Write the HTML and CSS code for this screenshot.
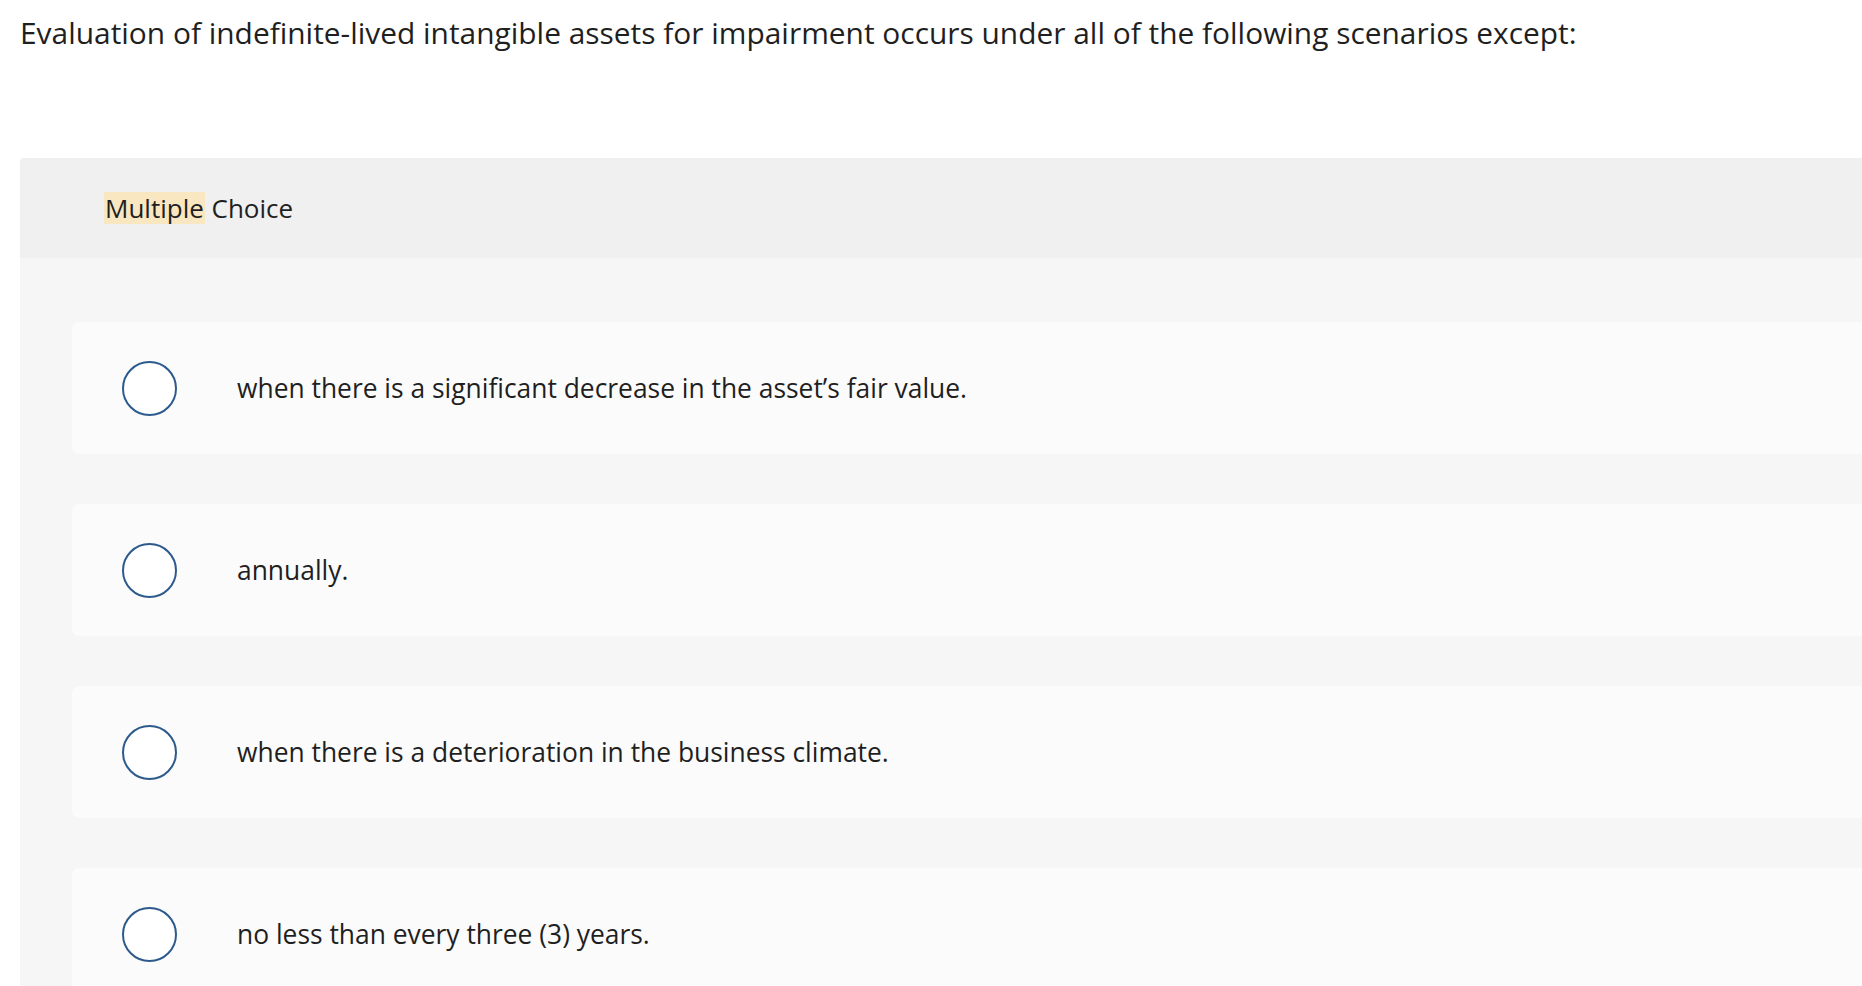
FILE: index.html
```html
<!DOCTYPE html>
<html lang="en">
<head>
<meta charset="utf-8">
<title>Multiple Choice</title>
<link rel="stylesheet" href="styles.css">
</head>
<body>
<h1 class="question">Evaluation of indefinite-lived intangible assets for impairment occurs under all of the following scenarios except:</h1>
<section class="panel">
  <div class="panel-header"><span class="hl">Multiple</span>&nbsp;Choice</div>
  <div class="panel-body">
    <div class="option"><span class="radio"></span><span class="label">when there is a significant decrease in the asset’s fair value.</span></div>
    <div class="option"><span class="radio"></span><span class="label">annually.</span></div>
    <div class="option"><span class="radio"></span><span class="label">when there is a deterioration in the business climate.</span></div>
    <div class="option"><span class="radio"></span><span class="label">no less than every three (3) years.</span></div>
  </div>
</section>
</body>
</html>
```

FILE: styles.css
```css
html, body {
  margin: 0;
  padding: 0;
  background: #ffffff;
  overflow: hidden;
  height: 986px;
}
body {
  font-family: "Open Sans", "Liberation Sans", sans-serif;
  font-variant-ligatures: none;
  color: #1f1f1f;
}
.question {
  margin: 0;
  padding: 14px 0 0 20px;
  font-size: 29.9px;
  font-weight: 400;
  line-height: 38px;
  height: 158px;
  box-sizing: border-box;
}
.panel {
  margin-left: 20px;
  width: calc(100% + 200px);
  border-radius: 4px 0 0 0;
  overflow: hidden;
}
.panel-header {
  height: 100px;
  background: #f0f0f0;
  display: flex;
  align-items: center;
  padding-left: 84px;
  font-size: 26px;
}
.hl {
  background: #f8e7c1;
  line-height: 32px;
  padding: 0 1px 0 1px;
}
.panel-body {
  background: #f6f6f6;
  padding: 64px 0 0 52px;
  display: flex;
  flex-direction: column;
  gap: 50px;
  min-height: 800px;
}
.option {
  height: 132px;
  background: #fbfbfb;
  border-radius: 7px 0 0 7px;
  display: flex;
  align-items: center;
  padding-left: 50px;
  gap: 60px;
  flex-shrink: 0;
}
.radio {
  width: 55px;
  height: 55px;
  box-sizing: border-box;
  border: 2.5px solid #2d5a8c;
  border-radius: 50%;
  background: #ffffff;
  flex-shrink: 0;
}
.label {
  font-size: 26.4px;
}
```
